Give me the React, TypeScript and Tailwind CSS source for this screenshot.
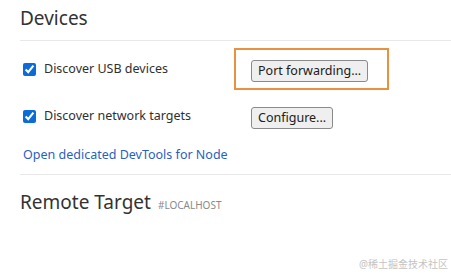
import React from 'react';

const font = { fontFamily: '"Noto Sans", "Noto Sans CJK SC", sans-serif' };

function OptionRow({ label, action, highlight }: { label: string; action: string; highlight?: boolean }) {
  return (
    <div className="flex h-[47px] items-center">
      <label className="flex w-[231px] items-center pl-[3px] text-[12.5px] text-[#303030]">
        <input type="checkbox" defaultChecked className="m-0 mr-[8px] h-[13px] w-[13px] accent-[#0b6bd9]" />
        {label}
      </label>
      <div className="relative">
        <button className="h-[22px] rounded-[3px] border border-[#8a8a8a] bg-[#efefef] px-[6px] text-[12.5px] leading-[20px] text-[#202020]">
          {action}
        </button>
        {highlight && (
          <span className="pointer-events-none absolute left-[-17px] right-[-21px] top-[-9px] bottom-[-8px] border-2 border-[#e8923f]" />
        )}
      </div>
    </div>
  );
}

export default function App() {
  return (
    <div className="relative h-[276px] w-[451px] overflow-hidden bg-white pl-5" style={font}>
      {/* Devices header */}
      <div className="flex h-[41px] items-start border-b border-[#e8e8e8] pt-[4px]">
        <h2 className="text-[19px] leading-[28px] text-[#333]">Devices</h2>
      </div>

      <div className="pt-[5px]">
        <OptionRow label="Discover USB devices" action="Port forwarding..." highlight />
        <OptionRow label="Discover network targets" action="Configure..." />
      </div>

      <div className="border-b border-[#e8e8e8] pb-[11px] pl-[3px] pt-[7px] leading-[16px]">
        <a className="block text-[12.5px] leading-[16px] text-[#2a5fc2]">Open dedicated DevTools for Node</a>
      </div>

      {/* Remote target header */}
      <div className="flex items-baseline gap-[7px] pt-[13px]">
        <h2 className="text-[19px] leading-[28px] text-[#333]">Remote Target</h2>
        <span className="text-[10px] uppercase text-[#8a8a8a]">#localhost</span>
      </div>

      <div className="absolute bottom-[4px] right-[3px] text-[10px] text-[#c4c4c4]">@稀土掘金技术社区</div>
    </div>
  );
}
